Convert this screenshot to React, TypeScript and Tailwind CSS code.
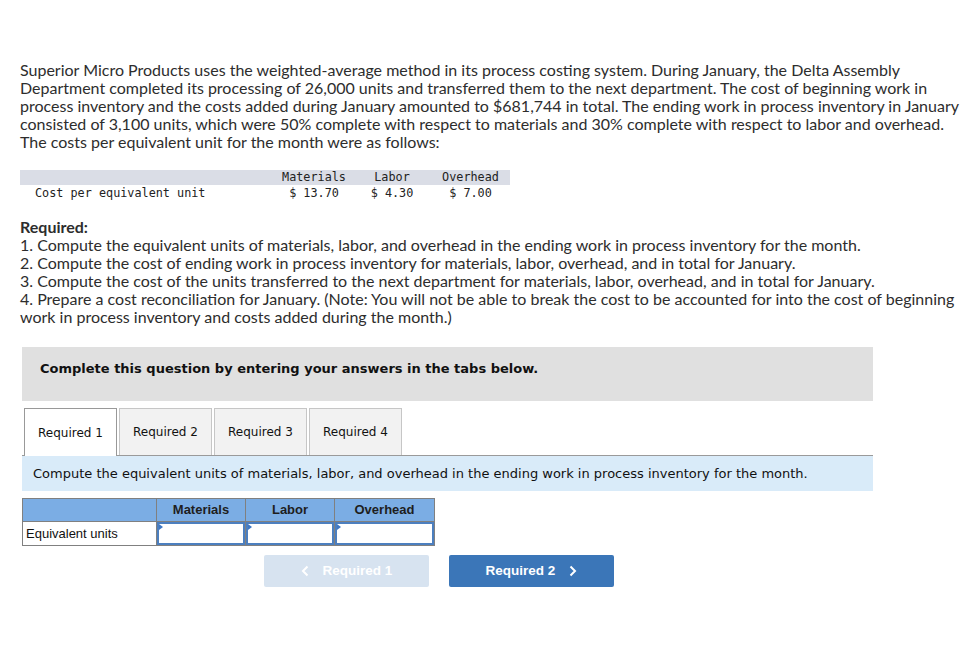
import React from "react";

const body = "font-['Lato','Open_Sans',sans-serif]";
const verdana = "font-['DejaVu_Sans','Verdana',sans-serif]";
const arial = "font-['Liberation_Sans','Arial',sans-serif]";
const mono = "font-['DejaVu_Sans_Mono','Liberation_Mono',monospace]";

const intro = [
  "Superior Micro Products uses the weighted-average method in its process costing system. During January, the Delta Assembly",
  "Department completed its processing of 26,000 units and transferred them to the next department. The cost of beginning work in",
  "process inventory and the costs added during January amounted to $681,744 in total. The ending work in process inventory in January",
  "consisted of 3,100 units, which were 50% complete with respect to materials and 30% complete with respect to labor and overhead.",
  "The costs per equivalent unit for the month were as follows:",
];

const required = [
  "1. Compute the equivalent units of materials, labor, and overhead in the ending work in process inventory for the month.",
  "2. Compute the cost of ending work in process inventory for materials, labor, overhead, and in total for January.",
  "3. Compute the cost of the units transferred to the next department for materials, labor, overhead, and in total for January.",
  "4. Prepare a cost reconciliation for January. (Note: You will not be able to break the cost to be accounted for into the cost of beginning",
  "work in process inventory and costs added during the month.)",
];

function AnswerCell() {
  return (
    <div className="h-full border-l border-[#808080] bg-white p-0">
      <div className="relative h-full border-2 border-[#4c7fbf] bg-white">
        <span className="absolute left-0 top-0 h-0 w-0 border-y-[3px] border-l-[4px] border-y-transparent border-l-[#3f78c4]" />
      </div>
    </div>
  );
}

export default function App() {
  return (
    <div className="min-h-[654px] w-[980px] bg-white text-[#2b2b2b]">
      <div className="pl-[20px] pt-[61px]">
        {/* problem statement */}
        <div className={`${body} text-[16px] leading-[18px] text-[#2d2d2d]`}>
          {intro.map((l) => (
            <div key={l} className="whitespace-nowrap">{l}</div>
          ))}
        </div>

        {/* cost per equivalent unit */}
        <div className={`${mono} mt-[19px] w-[490px] text-[11.8px] leading-[15px] text-[#222]`}>
          <div className="grid grid-cols-[255px_78px_78px_79px] bg-[#dadde6]">
            <div />
            <div className="text-center">Materials</div>
            <div className="text-center">Labor</div>
            <div className="text-center">Overhead</div>
          </div>
          <div className="grid grid-cols-[255px_78px_78px_79px] pt-[1px]">
            <div className="pl-[15px]">Cost per equivalent unit</div>
            <div className="text-center">$ 13.70</div>
            <div className="text-center">$ 4.30</div>
            <div className="text-center">$ 7.00</div>
          </div>
        </div>

        {/* requirements */}
        <div className={`${body} mt-[17px] text-[16px] leading-[18px] text-[#2d2d2d]`}>
          <div className="font-bold">Required:</div>
          {required.map((l) => (
            <div key={l} className="whitespace-nowrap">{l}</div>
          ))}
        </div>
      </div>

      <div className="ml-[22px] mt-[21px] w-[851px]">
        {/* instruction banner */}
        <div className={`${verdana} h-[54px] bg-[#e0e0e0] pl-[18px] pt-[13px] text-[13px] font-bold leading-[18px] text-[#111]`}>
          Complete this question by entering your answers in the tabs below.
        </div>

        {/* tabs */}
        <div className={`${verdana} mt-[7px] flex items-end border-b border-[#9a9a9a] text-[12px] text-[#111]`}>
          <div className="relative -mb-px ml-[2px] flex h-[48px] w-[93px] items-center justify-center border-x border-t border-[#999] bg-white">
            Required 1
          </div>
          {["Required 2", "Required 3", "Required 4"].map((t) => (
            <div
              key={t}
              className="ml-[2px] flex h-[47px] w-[93px] items-center justify-center border-x border-t border-[#c6c6c6] bg-[#f2f2f2]"
            >
              {t}
            </div>
          ))}
        </div>

        {/* tab prompt */}
        <div className={`${verdana} flex h-[35px] items-center bg-[#d9ebf9] pl-[11px] text-[13px] text-[#111]`}>
          Compute the equivalent units of materials, labor, and overhead in the ending work in process inventory for the month.
        </div>

        {/* answer grid */}
        <div className={`${arial} mt-[7px] w-[413px] border border-[#808080] text-[13px]`}>
          <div className="grid h-[22px] grid-cols-[133px_89px_89px_100px] bg-[#7badE4] font-bold text-[#1e1e1e]">
            <div />
            <div className="flex items-center justify-center border-l border-[#808080]">Materials</div>
            <div className="flex items-center justify-center border-l border-[#808080]">Labor</div>
            <div className="flex items-center justify-center border-l border-[#808080]">Overhead</div>
          </div>
          <div className="grid h-[24px] grid-cols-[133px_89px_89px_100px] border-t border-[#808080]">
            <div className="flex items-center pl-[3px] text-[#111]">Equivalent units</div>
            <AnswerCell />
            <AnswerCell />
            <AnswerCell />
          </div>
        </div>

        {/* navigation */}
        <div className={`${arial} mt-[9px] flex gap-[20px] pl-[242px] text-[13.5px] font-bold text-white`}>
          <div className="flex h-[32px] w-[165px] items-center justify-center gap-[14px] rounded-[2px] bg-[#d7e3f0]">
            <svg width="8" height="12" viewBox="0 0 8 12" fill="none">
              <path d="M6.5 1.5 2 6l4.5 4.5" stroke="white" strokeWidth="2" />
            </svg>
            <span>Required 1</span>
          </div>
          <div className="flex h-[32px] w-[165px] items-center justify-center gap-[14px] rounded-[2px] bg-[#3b76b8]">
            <span>Required 2</span>
            <svg width="8" height="12" viewBox="0 0 8 12" fill="none">
              <path d="M1.5 1.5 6 6l-4.5 4.5" stroke="white" strokeWidth="2" />
            </svg>
          </div>
        </div>
      </div>
    </div>
  );
}
